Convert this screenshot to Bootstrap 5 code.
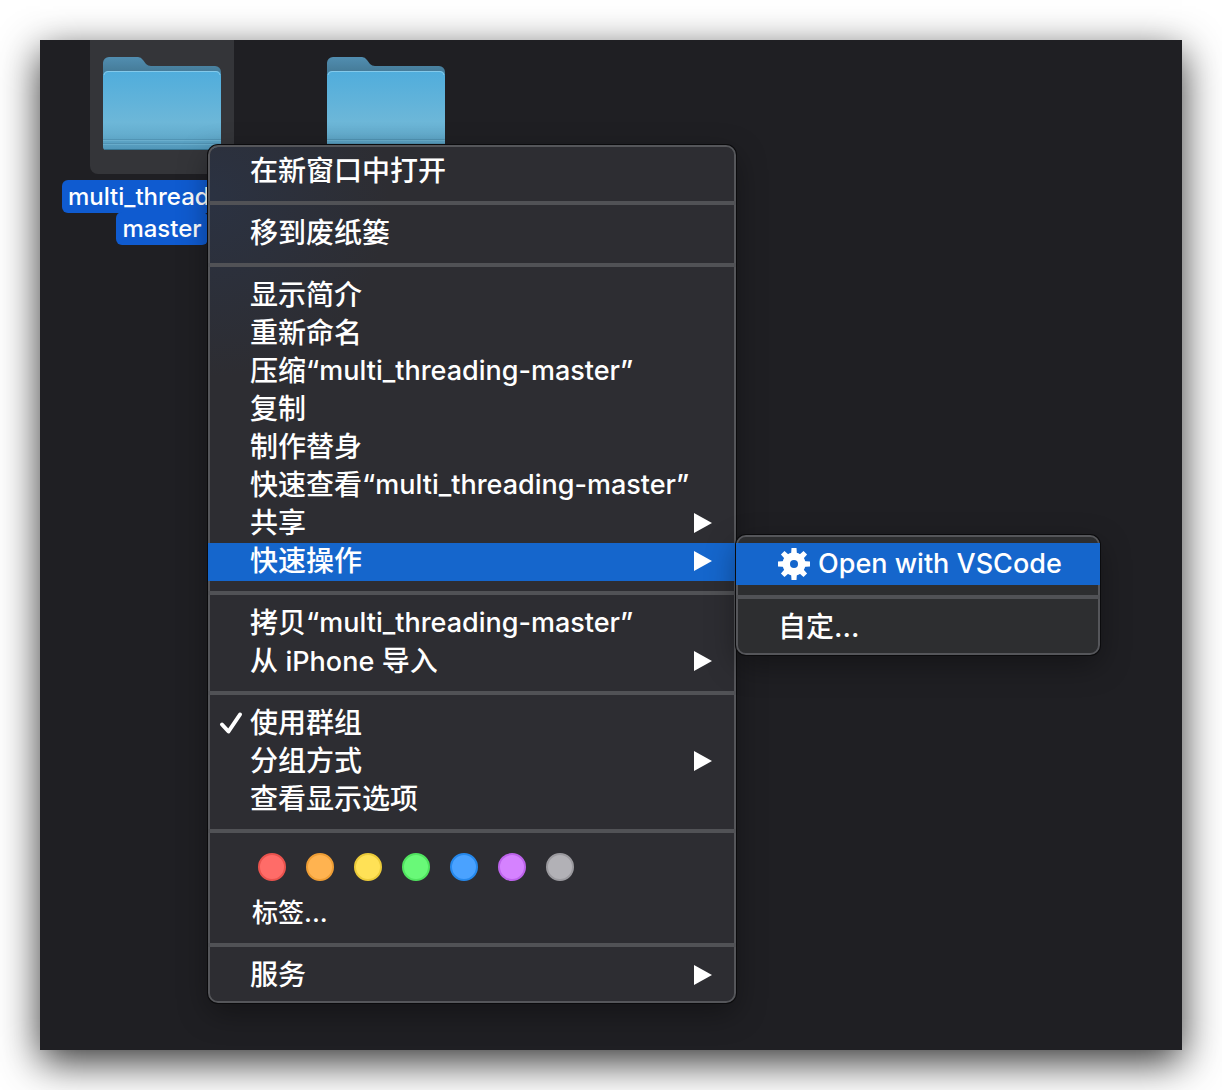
<!DOCTYPE html>
<html lang="zh-CN">
<head>
<meta charset="utf-8">
<meta name="viewport" content="width=device-width, initial-scale=1">
<title>Finder</title>
<link href="https://cdn.jsdelivr.net/npm/bootstrap@5.3.0/dist/css/bootstrap.min.css" rel="stylesheet">
<style>
  body { background: #fff; font-family: Inter, "Noto Sans CJK SC", sans-serif; font-weight: 500; padding: 40px; }
  .desktop { min-height: calc(100vh - 80px); background: #1f1f23; box-shadow: 0 12px 38px rgba(0,0,0,.8); padding-left: 10px; }
  .file-item { width: 224px; }
  .file-thumb { width: 144px; height: 134px; padding: 16px 12px 0; border-radius: 0 0 8px 8px; }
  .file-item.selected .file-thumb { background: #343539; }
  .file-name { font-size: 24px; line-height: 32px; margin-top: 7px; color: #fff; }
  .file-name span { background: #0f5bd0; border-radius: 6px; padding: 2px 6px; -webkit-box-decoration-break: clone; box-decoration-break: clone; }

  .ctx { --bs-dropdown-bg: #2d2d32; --bs-dropdown-border-color: #55565a; --bs-dropdown-border-width: 2px; --bs-dropdown-border-radius: 10px;
    --bs-dropdown-padding-y: 6px; --bs-dropdown-padding-x: 0; --bs-dropdown-font-size: 28px; --bs-dropdown-color: #fff;
    --bs-dropdown-link-color: #fff; --bs-dropdown-link-hover-color: #fff; --bs-dropdown-link-hover-bg: #1566cc;
    --bs-dropdown-link-active-bg: #1566cc; --bs-dropdown-item-padding-y: 0; --bs-dropdown-item-padding-x: 24px;
    box-shadow: 0 0 0 1px #0b0b0d, 0 10px 30px rgba(0,0,0,.35); }
  .ctx > li { position: relative; margin: 0 -2px; }
  .ctx .dropdown-item { display: flex; align-items: center; height: 38px; line-height: 36px; padding-left: 42px; padding-bottom: 2px; font-weight: 500; }
  .ctx .dropdown-divider { height: 4px; margin: 10px 0; border: 0; background: #515256; opacity: 1; }
  .ctx-main { left: 168px; top: 105px; width: 528px; background-image: radial-gradient(circle at 0 50px, rgba(40,58,90,.4), transparent 180px); }
  .ctx-sub { left: 100%; top: -8px; width: 364px; --bs-dropdown-bg: #2d2e30; }
  .ctx .ctx-sub .tall { height: 42px; padding-bottom: 0; }
  .latin { font-size: 27px; }
  .tick { position: absolute; left: 11px; top: 6px; }
  .tags { padding: 10px 50px 14px; gap: 20px; }
  .tag { width: 28px; height: 28px; padding: 0; border: 2px solid; border-radius: 50%; }
  .ctx .tag-label { font-size: 26px; padding-left: 44px; }
  .red { background: #ff6c68; border-color: #ea534e; }
  .orange { background: #ffb350; border-color: #ef9e35; }
  .yellow { background: #ffe156; border-color: #eccb39; }
  .green { background: #69f978; border-color: #50e45f; }
  .blue { background: #4aa2ff; border-color: #2588ec; }
  .purple { background: #d582ff; border-color: #bd63ec; }
  .gray { background: #b2b1b6; border-color: #9b9a9f; }
</style>
</head>
<body>
<svg width="0" height="0" class="position-absolute" aria-hidden="true">
  <defs>
    <linearGradient id="front" x1="0" y1="0" x2="0" y2="1">
      <stop offset="0" stop-color="#50addc"/><stop offset=".65" stop-color="#6db7d8"/><stop offset=".8" stop-color="#64adce"/><stop offset="1" stop-color="#5095b7"/>
    </linearGradient>
    <linearGradient id="back" gradientUnits="userSpaceOnUse" x1="0" y1="0" x2="0" y2="16">
      <stop offset="0" stop-color="#528fb2"/><stop offset="1" stop-color="#457b98"/>
    </linearGradient>
    <symbol id="folder" viewBox="0 0 120 96">
      <path d="M1 7a6 6 0 0 1 6-6h29q3 0 5 3l3 4q2 2 5 2h64a6 6 0 0 1 6 6v30H1z" fill="url(#back)"/>
      <path d="M1 20a5 5 0 0 1 5-5h108a5 5 0 0 1 5 5v71a3 3 0 0 1-3 3H4a3 3 0 0 1-3-3z" fill="url(#front)"/>
      <path d="M2 19a4 4 0 0 1 4-3.500h108a4 4 0 0 1 4 3.500" fill="none" stroke="#83c9ea"/>
      <path d="M1 83.500h118M1 87.500h118" stroke="#4d8dad" stroke-opacity=".7"/>
      <path d="M1 84.500h118M1 88.500h118" stroke="#78b9d6" stroke-opacity=".5"/>
      <path d="M3 93.500h114" stroke="#347390"/>
    </symbol>
    <symbol id="arrow" viewBox="0 0 18 20"><path d="M0 0L18 10L0 20z" fill="#fff"/></symbol>
  </defs>
</svg>

<main class="desktop position-relative d-flex">
  <div class="file-item selected d-flex flex-column align-items-center text-center">
    <div class="file-thumb"><svg width="120" height="96"><use href="#folder"/></svg></div>
    <div class="file-name"><span>multi_threading-master</span></div>
  </div>
  <div class="file-item d-flex flex-column align-items-center">
    <div class="file-thumb"><svg width="120" height="96"><use href="#folder"/></svg></div>
  </div>

  <ul class="dropdown-menu show ctx ctx-main">
    <li><button type="button" class="dropdown-item">在新窗口中打开</button></li>
    <li><hr class="dropdown-divider"></li>
    <li><button type="button" class="dropdown-item">移到废纸篓</button></li>
    <li><hr class="dropdown-divider"></li>
    <li><button type="button" class="dropdown-item">显示简介</button></li>
    <li><button type="button" class="dropdown-item">重新命名</button></li>
    <li><button type="button" class="dropdown-item">压缩“<span class="latin">multi_threading-master</span>”</button></li>
    <li><button type="button" class="dropdown-item">复制</button></li>
    <li><button type="button" class="dropdown-item">制作替身</button></li>
    <li><button type="button" class="dropdown-item">快速查看“<span class="latin">multi_threading-master</span>”</button></li>
    <li><button type="button" class="dropdown-item">共享<svg class="ms-auto" width="18" height="20"><use href="#arrow"/></svg></button></li>
    <li>
      <button type="button" class="dropdown-item active" aria-expanded="true">快速操作<svg class="ms-auto" width="18" height="20"><use href="#arrow"/></svg></button>
      <ul class="dropdown-menu show ctx ctx-sub">
        <li><button type="button" class="dropdown-item active tall"><svg class="me-2" width="32" height="32" viewBox="-16 -16 32 32" aria-hidden="true">
          <g fill="#fff">
            <g id="teeth"><path d="M-3-8L-2.500-16h5L3-8zM-3 8L-2.500 16h5L3 8zM-8-3L-16-2.500v5L-8 3zM8-3L16-2.500v5L8 3z"/></g>
            <use href="#teeth" transform="rotate(45)"/>
            <circle r="11.500"/>
          </g>
          <circle r="4" fill="#1566cc"/></svg><span class="latin">Open with VSCode</span></button></li>
        <li><hr class="dropdown-divider"></li>
        <li><button type="button" class="dropdown-item">自定...</button></li>
      </ul>
    </li>
    <li><hr class="dropdown-divider"></li>
    <li><button type="button" class="dropdown-item">拷贝“<span class="latin">multi_threading-master</span>”</button></li>
    <li><button type="button" class="dropdown-item"><span>从 <span class="latin">iPhone</span> 导入</span><svg class="ms-auto" width="18" height="20"><use href="#arrow"/></svg></button></li>
    <li><hr class="dropdown-divider"></li>
    <li><button type="button" class="dropdown-item"><svg class="tick" width="24" height="24" viewBox="0 0 24 24"><path d="M3 13.500L9.500 20.500L21 3.500" fill="none" stroke="#fff" stroke-width="4" stroke-linecap="round" stroke-linejoin="round"/></svg>使用群组</button></li>
    <li><button type="button" class="dropdown-item">分组方式<svg class="ms-auto" width="18" height="20"><use href="#arrow"/></svg></button></li>
    <li><button type="button" class="dropdown-item">查看显示选项</button></li>
    <li><hr class="dropdown-divider"></li>
    <li class="tags d-flex">
      <button type="button" class="tag red" aria-label="红色"></button>
      <button type="button" class="tag orange" aria-label="橙色"></button>
      <button type="button" class="tag yellow" aria-label="黄色"></button>
      <button type="button" class="tag green" aria-label="绿色"></button>
      <button type="button" class="tag blue" aria-label="蓝色"></button>
      <button type="button" class="tag purple" aria-label="紫色"></button>
      <button type="button" class="tag gray" aria-label="灰色"></button>
    </li>
    <li><button type="button" class="dropdown-item tag-label">标签...</button></li>
    <li><hr class="dropdown-divider"></li>
    <li><button type="button" class="dropdown-item">服务<svg class="ms-auto" width="18" height="20"><use href="#arrow"/></svg></button></li>
  </ul>
</main>
<script src="https://cdn.jsdelivr.net/npm/bootstrap@5.3.0/dist/js/bootstrap.bundle.min.js"></script>
</body>
</html>
